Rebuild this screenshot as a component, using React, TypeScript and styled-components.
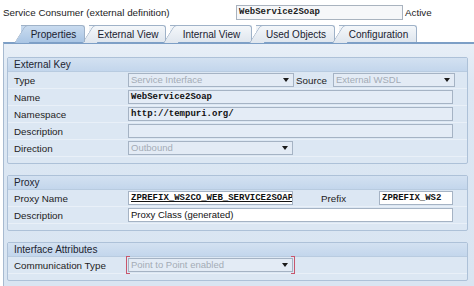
import React from 'react';
import styled, { createGlobalStyle, css } from 'styled-components';

const GlobalStyle = createGlobalStyle`
  html, body {
    margin: 0;
    padding: 0;
    background: #ffffff;
    overflow: hidden;
  }
  body {
    font-family: "Liberation Sans", Arial, sans-serif;
    font-size: 9.5px;
    color: #1c1c1c;
  }
`;

const Screen = styled.div`
  width: 474px;
  height: 286px;
  display: flex;
  flex-direction: column;
  background: #ffffff;
  overflow: hidden;
`;

const TitleBar = styled.div`
  display: flex;
  align-items: center;
  height: 24px;
  padding: 0 0 0 3px;
`;

const TitleText = styled.div`
  width: 233px;
  font-size: 9.8px;
`;

const ObjectBox = styled.div`
  width: 163px;
  height: 13px;
  border: 1px solid #a9b3bf;
  background: #f6f7f9;
  font-family: "Liberation Mono", "Courier New", monospace;
  font-size: 9px;
  font-weight: bold;
  line-height: 13px;
  padding-left: 2px;
  box-sizing: content-box;
`;

const Status = styled.div`
  margin-left: 2px;
  font-size: 9.8px;
`;

const TabStrip = styled.div`
  display: flex;
  height: 17px;
  padding-left: 17px;
  margin-top: 1px;
`;

const Tab = styled.div<{ $active?: boolean; $w: number }>`
  position: relative;
  width: ${p => p.$w}px;
  height: 16px;
  margin-left: 4px;
  border-top: 1px solid #9fb2c8;
  border-right: 1px solid #9fb2c8;
  border-top-right-radius: 3px;
  background: ${p => (p.$active ? 'linear-gradient(#c9dbef, #a9c5e4)' : 'linear-gradient(#f4f7fa, #dfe6ee)')};
  display: flex;
  align-items: center;
  justify-content: center;
  font-size: 10px;
  color: #1a2230;
  z-index: ${p => (p.$active ? 3 : 1)};
  &::before {
    content: '';
    position: absolute;
    left: -7px;
    top: -1px;
    width: 14px;
    height: 17px;
    border-left: 1px solid #9fb2c8;
    border-top: 1px solid #9fb2c8;
    border-top-left-radius: 3px;
    background: ${p => (p.$active ? 'linear-gradient(#c9dbef, #a9c5e4)' : 'linear-gradient(#f4f7fa, #dfe6ee)')};
    transform: skewX(-32deg);
    transform-origin: bottom left;
    z-index: -1;
  }
  span {
    position: relative;
    padding-left: 2px;
  }
`;

const Panel = styled.div`
  flex: 1;
  margin-left: 3px;
  border-left: 1px solid #a7bad0;
  border-top: 2px solid #7d9fc6;
  background: linear-gradient(#e8eff7, #dce7f3 40px, #d9e5f2);
  padding: 13px 6px 0 3px;
  display: flex;
  flex-direction: column;
  gap: 11px;
`;

const Group = styled.div`
  border: 1px solid #adc1d8;
  border-radius: 2px;
  background: #dce7f3;
  padding-bottom: 6px;
`;

const GroupHeader = styled.div`
  height: 13px;
  line-height: 13px;
  padding-left: 6px;
  background: linear-gradient(#d3e1f1, #c3d6ec);
  border-bottom: 1px solid #b8cbe0;
  font-size: 10px;
  color: #1c2430;
`;

const Row = styled.div`
  display: flex;
  align-items: center;
  height: 16px;
  padding-left: 6px;
  border-bottom: 1px solid #e9f0f8;
`;

const Label = styled.div`
  width: 114px;
  font-size: 9.8px;
`;

const SideLabel = styled.div<{ $w: number; $pad: number }>`
  width: ${p => p.$w}px;
  padding-left: ${p => p.$pad}px;
  box-sizing: border-box;
  font-size: 9.8px;
`;

const Field = styled.div<{ $w: number; $kind?: 'disabled' | 'display' | 'edit'; $mono?: boolean }>`
  position: relative;
  width: ${p => p.$w}px;
  height: 12px;
  line-height: 12px;
  padding: 0 2px;
  box-sizing: content-box;
  border: 1px solid #a5b3c4;
  white-space: nowrap;
  overflow: hidden;
  font-size: 9.5px;
  ${p =>
    p.$kind === 'edit'
      ? css`
          background: #ffffff;
          color: #111;
        `
      : p.$kind === 'disabled'
      ? css`
          background: #e3ebf5;
          color: #a3abb6;
        `
      : css`
          background: #e4ecf6;
          color: #111;
        `}
  ${p =>
    p.$mono &&
    css`
      font-family: "Liberation Mono", "Courier New", monospace;
      font-size: 9px;
      font-weight: bold;
    `}
`;

const Arrow = styled.span`
  position: absolute;
  right: 4px;
  top: 4px;
  width: 0;
  height: 0;
  border-left: 3.5px solid transparent;
  border-right: 3.5px solid transparent;
  border-top: 4px solid #1a1a1a;
`;

const Underlined = styled.span`
  text-decoration: underline;
`;

const Required = styled.div`
  position: relative;
  margin-left: -2px;
  padding: 2px 2px;
  &::before,
  &::after {
    content: '';
    position: absolute;
    top: 0;
    bottom: 0;
    width: 3px;
    border: 1.5px solid #c8566c;
  }
  &::before {
    left: 0;
    border-right: none;
  }
  &::after {
    right: 0;
    border-left: none;
  }
`;

const tabs = [
  { name: 'Properties', w: 63, active: true },
  { name: 'External View', w: 76 },
  { name: 'Internal View', w: 81 },
  { name: 'Used Objects', w: 78 },
  { name: 'Configuration', w: 77 },
];

export default function App() {
  return (
    <Screen>
      <GlobalStyle />
      <TitleBar>
        <TitleText>Service Consumer (external definition)</TitleText>
        <ObjectBox>WebService2Soap</ObjectBox>
        <Status>Active</Status>
      </TitleBar>
      <TabStrip>
        {tabs.map(t => (
          <Tab key={t.name} $w={t.w} $active={t.active}>
            <span>{t.name}</span>
          </Tab>
        ))}
      </TabStrip>
      <Panel>
        <Group>
          <GroupHeader>External Key</GroupHeader>
          <Row>
            <Label>Type</Label>
            <Field $w={160} $kind="disabled">
              Service Interface
              <Arrow />
            </Field>
            <SideLabel $w={39} $pad={2}>Source</SideLabel>
            <Field $w={116} $kind="disabled">
              External WSDL
              <Arrow />
            </Field>
          </Row>
          <Row>
            <Label>Name</Label>
            <Field $w={319} $mono>WebService2Soap</Field>
          </Row>
          <Row>
            <Label>Namespace</Label>
            <Field $w={319} $mono>http://tempuri.org/</Field>
          </Row>
          <Row>
            <Label>Description</Label>
            <Field $w={319} />
          </Row>
          <Row>
            <Label>Direction</Label>
            <Field $w={159} $kind="disabled">
              Outbound
              <Arrow />
            </Field>
          </Row>
        </Group>
        <Group>
          <GroupHeader>Proxy</GroupHeader>
          <Row>
            <Label>Proxy Name</Label>
            <Field $w={159} $kind="edit" $mono>
              <Underlined>ZPREFIX_WS2CO_WEB_SERVICE2SOAP</Underlined>
            </Field>
            <SideLabel $w={86} $pad={28}>Prefix</SideLabel>
            <Field $w={68} $kind="edit" $mono>ZPREFIX_WS2</Field>
          </Row>
          <Row>
            <Label>Description</Label>
            <Field $w={319} $kind="edit">Proxy Class (generated)</Field>
          </Row>
        </Group>
        <Group>
          <GroupHeader>Interface Attributes</GroupHeader>
          <Row>
            <Label>Communication Type</Label>
            <Required>
              <Field $w={159} $kind="disabled">
                Point to Point enabled
                <Arrow />
              </Field>
            </Required>
          </Row>
        </Group>
      </Panel>
    </Screen>
  );
}
